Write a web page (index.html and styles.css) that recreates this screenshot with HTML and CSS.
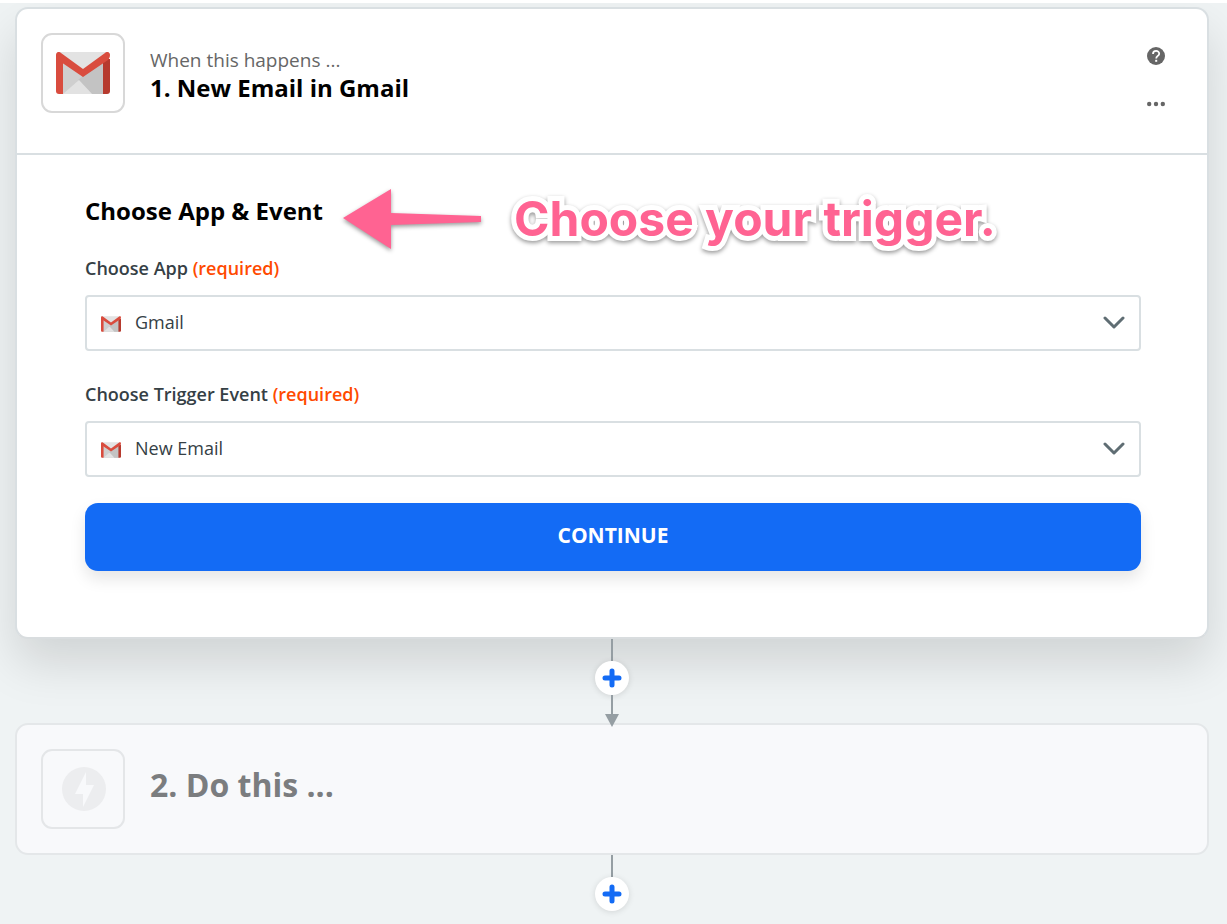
FILE: index.html
```html
<!DOCTYPE html>
<html lang="en">
<head>
    <meta charset="UTF-8">
    <meta name="viewport" content="width=device-width, initial-scale=1.0">
    <title>Zap editor</title>
    <link rel="stylesheet" href="styles.css">
</head>
<body>

<!-- shared icons -->
<svg class="sprite" aria-hidden="true">
    <symbol id="gmail" viewBox="0 0 54 42">
        <path fill="#e3e3e3" d="M3 0h48v42H3z"/>
        <path fill="#cfcfcf" d="M6 9l21 15L48 9v33H6z"/>
        <path fill="#c3c3c3" d="M27 24L48 9v33H36L22 28z"/>
        <path fill="#e2e2e2" d="M23 28l13 14H7z"/>
        <path fill="#d94c3e" d="M0 3h7v39H3a3 3 0 0 1-3-3z"/>
        <path fill="#b63a2e" d="M47 7h7v32a3 3 0 0 1-3 3h-4z"/>
        <path fill="#d94c3e" d="M0 3C0 0 3-1 5 1l22 16L49 1c2-2 5-1 5 2 0 2-1 4-2 5L27 25 2 8C1 7 0 5 0 3z"/>
    </symbol>
    <symbol id="plus" viewBox="0 0 20 20">
        <path d="M10 3v14M3 10h14" fill="none" stroke="#136bf5" stroke-width="5" stroke-linecap="round"/>
    </symbol>
    <symbol id="chevron" viewBox="0 0 24 14">
        <path d="M3 2l9 9 9-9" fill="none" stroke="#5f6d73" stroke-width="3" stroke-linecap="round" stroke-linejoin="round"/>
    </symbol>
</svg>

<main class="editor">
    <section class="card card-open">
        <header class="card-header">
            <div class="app-icon">
                <svg class="gmail-large"><use href="#gmail"/></svg>
            </div>
            <div class="card-titles">
                <p class="card-kicker">When this happens ...</p>
                <h1 class="card-title">1. New Email in Gmail</h1>
            </div>
            <div class="card-actions">
                <button class="icon-button" type="button" aria-label="Help">
                    <svg width="18" height="18" viewBox="0 0 18 18">
                        <circle cx="9" cy="9" r="9" fill="#666"/>
                        <path d="M6 7c0-4 6.200-4 6.200-.3 0 2.100-3 2.300-3 4.700" fill="none" stroke="#fff" stroke-width="1.800"/>
                        <path d="M8.200 12.800h2v2h-2z" fill="#fff"/>
                    </svg>
                </button>
                <button class="icon-button" type="button" aria-label="More options">
                    <svg width="18" height="18" viewBox="0 0 18 18" fill="#666">
                        <circle cx="2.200" cy="9" r="2.200"/>
                        <circle cx="9" cy="9" r="2.200"/>
                        <circle cx="15.800" cy="9" r="2.200"/>
                    </svg>
                </button>
            </div>
        </header>

        <form class="card-body">
            <div class="section-head">
                <h2 class="section-title">Choose App &amp; Event</h2>
                <div class="callout">
                    <svg class="callout-arrow" width="138" height="60" viewBox="0 0 138 60">
                        <path fill="#ff6392" d="M0 29L48 0v24l90 3v6l-90 3v24z"/>
                    </svg>
                    <span class="callout-text">Choose your trigger.</span>
                </div>
            </div>

            <div class="field">
                <label class="field-label" for="app">Choose App <span class="required">(required)</span></label>
                <div class="select">
                    <select id="app">
                        <option>Gmail</option>
                    </select>
                    <svg class="select-icon"><use href="#gmail"/></svg>
                    <svg class="select-chevron"><use href="#chevron"/></svg>
                </div>
            </div>

            <div class="field">
                <label class="field-label" for="event">Choose Trigger Event <span class="required">(required)</span></label>
                <div class="select">
                    <select id="event">
                        <option>New Email</option>
                    </select>
                    <svg class="select-icon"><use href="#gmail"/></svg>
                    <svg class="select-chevron"><use href="#chevron"/></svg>
                </div>
            </div>

            <button class="continue" type="button">CONTINUE</button>
        </form>
    </section>

    <div class="connector">
        <span class="line"></span>
        <button class="add-step" type="button" aria-label="Add a step"><svg><use href="#plus"/></svg></button>
        <span class="line"></span>
        <svg class="arrow-head" viewBox="0 0 14 13"><path fill="#959ea3" d="M0 0h14L7 13z"/></svg>
    </div>

    <section class="card card-closed">
        <header class="card-header">
            <div class="app-icon">
                <svg width="46" height="46" viewBox="0 0 46 46">
                    <circle cx="24" cy="23" r="22" fill="#ecedef"/>
                    <path fill="#f8f9fb" d="M26 6L15 28h8v13l11-22h-8z"/>
                </svg>
            </div>
            <h1 class="step-title">2. Do this ...</h1>
        </header>
    </section>

    <div class="connector">
        <span class="line"></span>
        <button class="add-step" type="button" aria-label="Add a step"><svg><use href="#plus"/></svg></button>
    </div>
</main>

</body>
</html>
```
FILE: styles.css
```css
* {
    box-sizing: border-box;
}
body {
    margin: 0;
    border-top: 3px solid #fff;
    background: #eff3f4;
    color: #000;
    font-family: "Open Sans", sans-serif;
    font-size: 18px;
    line-height: 24px;
}
h1, h2, p {
    margin: 0;
}
button, select {
    font-family: inherit;
    cursor: pointer;
}
.sprite {
    position: absolute;
    width: 0;
    height: 0;
}
.editor {
    padding: 4px 18px 12px 15px;
}

/* Cards */
.card {
    border: 2px solid #d9dfe2;
    border-radius: 13px;
    background: #fff;
}
.card-open {
    border-bottom-color: #d9dddf;
    box-shadow: 0 24px 48px rgba(0, 0, 0, 0.13);
}
.card-closed {
    border-color: #e4e7e9;
    background: #f8f9fb;
}
.card-header {
    display: flex;
    align-items: flex-start;
    gap: 25px;
    padding: 24px;
}
.card-open .card-header {
    padding: 24px 39px 37px 24px;
    border-bottom: 2px solid #d9dfe2;
}
.app-icon {
    display: flex;
    align-items: center;
    justify-content: center;
    width: 84px;
    height: 80px;
    border: 2px solid #d8d8d8;
    border-radius: 11px;
}
.card-closed .app-icon {
    border-color: #e4e6e8;
}
.gmail-large {
    width: 54px;
    height: 42px;
}
.card-titles {
    flex: 1;
    padding-top: 15px;
}
.card-kicker {
    color: #666;
    font-size: 19px;
}
.card-title, .section-title {
    font-size: 24px;
    line-height: 32px;
    font-weight: 700;
}
.step-title {
    padding-top: 16px;
    color: #7b7d7f;
    font-size: 32px;
    line-height: 40px;
    font-weight: 700;
}
.card-actions {
    display: flex;
    flex-direction: column;
    gap: 24px;
    padding-top: 11px;
}
.icon-button {
    display: flex;
    align-items: center;
    justify-content: center;
    width: 24px;
    height: 24px;
    padding: 0;
    border: 0;
    background: none;
}

/* Form */
.card-body {
    padding: 40px 66px 66px 68px;
}
.section-head {
    position: relative;
    margin-bottom: 29px;
}
.field {
    margin-bottom: 31px;
}
.field-label {
    display: block;
    margin-bottom: 15px;
    color: #354045;
    font-weight: 600;
}
.required {
    color: #ff4a00;
}
.select {
    display: grid;
    align-items: center;
}
.select > * {
    grid-area: 1 / 1;
}
.select select {
    appearance: none;
    width: 100%;
    height: 56px;
    padding: 0 56px 2px 48px;
    border: 2px solid #d9dfe2;
    border-radius: 4px;
    background: #fff;
    color: #354045;
    font-size: 18px;
}
.select-icon {
    width: 20px;
    height: 16px;
    margin: 2px 0 0 16px;
    pointer-events: none;
}
.select-chevron {
    justify-self: end;
    width: 24px;
    height: 14px;
    margin-right: 15px;
    pointer-events: none;
}
.continue {
    display: block;
    width: 100%;
    height: 68px;
    margin-top: -5px;
    padding: 0 0 4px;
    border: 0;
    border-radius: 13px;
    background: #136bf5;
    box-shadow: 0 8px 16px rgba(0, 0, 0, 0.1);
    color: #fff;
    font-size: 21px;
    font-weight: 700;
}

/* Callout drawn over the form */
.callout {
    position: absolute;
    top: -6px;
    left: 258px;
    display: flex;
    align-items: center;
    gap: 33px;
    white-space: nowrap;
}
.callout-arrow {
    overflow: visible;
    filter: drop-shadow(0 2px 2px rgba(0, 0, 0, 0.4));
}
.callout-text {
    color: #ff6392;
    font-family: Inter, sans-serif;
    font-size: 48px;
    line-height: 60px;
    font-weight: 700;
    -webkit-text-stroke: 10px #fff;
    paint-order: stroke fill;
    stroke-linejoin: round;
    filter: drop-shadow(0 2px 2px rgba(0, 0, 0, 0.4));
}

/* Connectors between steps */
.connector {
    position: relative;
    display: flex;
    flex-direction: column;
    align-items: center;
}
.line {
    width: 2px;
    height: 22px;
    background: #959ea3;
}
.add-step {
    display: flex;
    align-items: center;
    justify-content: center;
    width: 34px;
    height: 34px;
    padding: 0;
    border: 0;
    border-radius: 50%;
    background: #fff;
    box-shadow: 0 1px 6px rgba(0, 0, 0, 0.12);
}
.add-step svg {
    width: 20px;
    height: 20px;
}
.arrow-head {
    width: 14px;
    height: 13px;
    margin: -3px 0 -4px;
}
```
